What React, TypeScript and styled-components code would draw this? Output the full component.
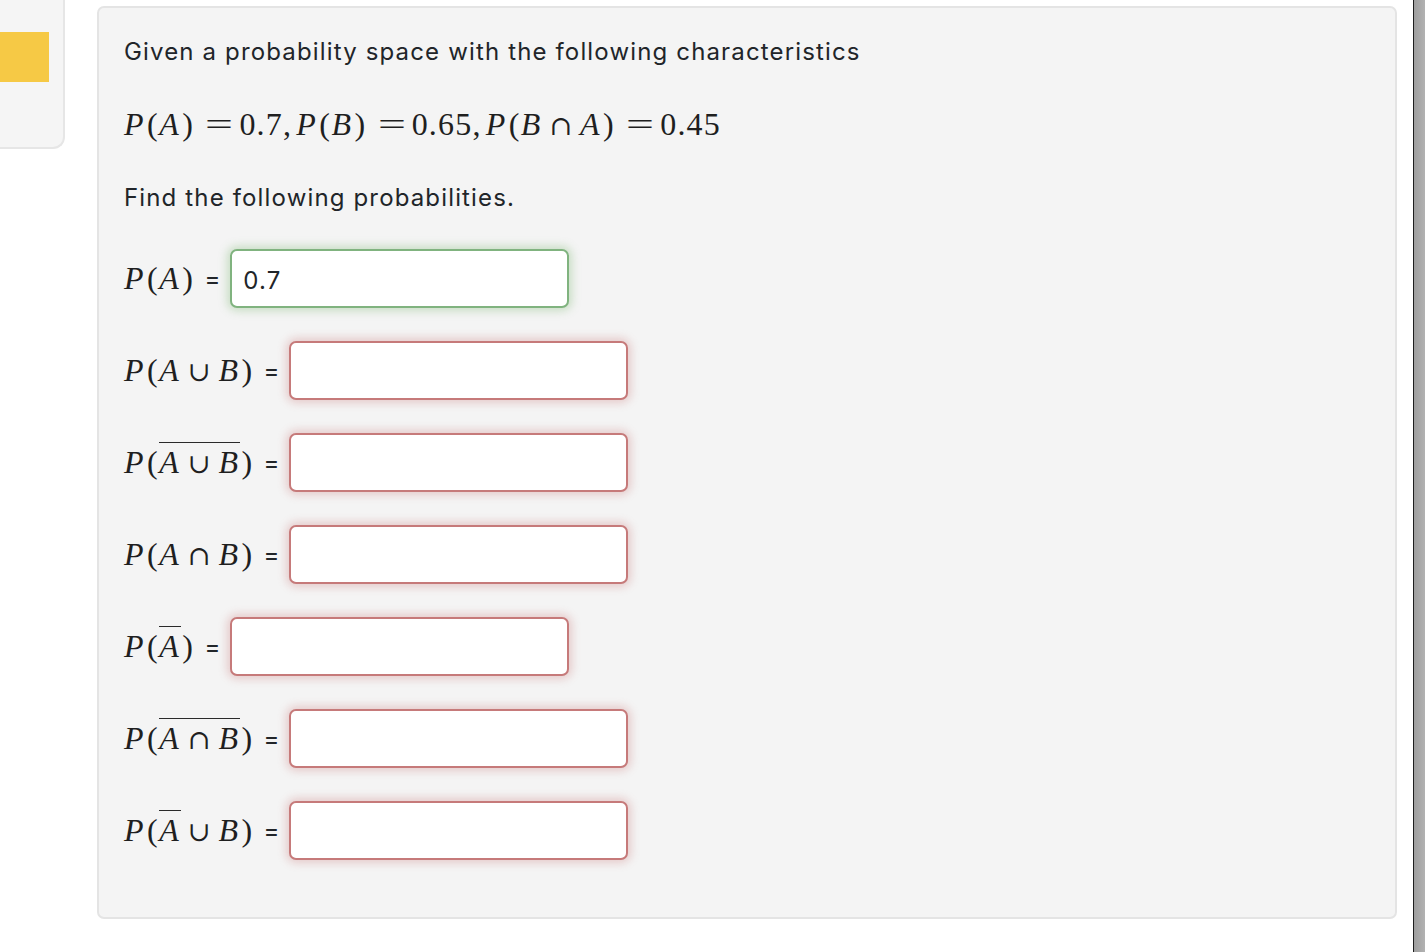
import React from "react";
import styled, { createGlobalStyle, css } from "styled-components";

const Global = createGlobalStyle`
  html, body { margin: 0; padding: 0; background: #ffffff; }
  body { font-family: Inter, "Noto Sans", "Liberation Sans", sans-serif; color: #212529; }
`;

const Page = styled.div`
  display: flex;
  align-items: flex-start;
  width: 1425px;
  height: 952px;
  overflow: hidden;
`;

const Sidebar = styled.aside`
  box-sizing: border-box;
  width: 65px;
  height: 149px;
  flex: none;
  background: #f5f5f5;
  border-right: 2px solid #e6e6e6;
  border-bottom: 2px solid #e6e6e6;
  border-bottom-right-radius: 12px;
  padding-top: 32px;
`;

const Flag = styled.div`
  width: 49px;
  height: 50px;
  background: #f6c945;
`;

const Card = styled.main`
  box-sizing: border-box;
  flex: none;
  width: 1300px;
  height: 913px;
  margin: 6px 0 0 32px;
  background: #f4f4f4;
  border: 2px solid #e4e4e4;
  border-radius: 7px;
  padding: 18px 0 0 25px;
`;

const Stripe = styled.div`
  flex: none;
  margin-left: 16px;
  width: 12px;
  height: 952px;
  border-left: 1px solid #1e1e1e;
  background: linear-gradient(90deg, #9e9e9e, #b4b4b4);
`;

const Para = styled.p`
  margin: 0;
  font-size: 24px;
  line-height: 52px;
  letter-spacing: 1.15px;
`;

const MathLine = styled.div`
  margin: 20px 0 22px;
  height: 52px;
  display: flex;
  align-items: center;
`;

const M = styled.span`
  font-family: "Liberation Serif", "DejaVu Serif", serif;
  font-size: 32px;
  line-height: normal;
  color: #1f1f1f;
  white-space: nowrap;
`;

const I = styled.span`
  font-style: italic;
  margin-right: 2px;
`;

const Paren = styled.span`
  margin: 0 1.5px;
`;

const Rel = styled.span`
  display: inline-block;
  width: 28px;
  text-align: center;
  margin: 0 6px 0 11px;
  transform: scaleX(1.55);
`;

const Num = styled.span<{ $gap?: boolean }>`
  letter-spacing: 1.2px;
  margin-right: ${(p) => (p.$gap ? "4px" : "0")};
`;

const Bin = styled.span`
  font-family: "DejaVu Serif", serif;
  font-size: 27px;
  margin: 0 8px 0 7px;
`;

const Over = styled.span`
  position: relative;
  &::before {
    content: "";
    position: absolute;
    left: 0;
    right: 0;
    top: -2px;
    border-top: 1.5px solid #2a2a2a;
  }
`;

const Rows = styled.div`
  display: flex;
  flex-direction: column;
  gap: 34px;
  margin-top: 25px;
`;

const Row = styled.div`
  display: flex;
  align-items: center;
  height: 58px;
`;

const Eq = styled.span`
  font-size: 24px;
  margin: 0 10px 0 10px;
`;

const Input = styled.input<{ $state: "ok" | "bad" }>`
  box-sizing: border-box;
  width: 339px;
  height: 59px;
  border-radius: 7px;
  background: #ffffff;
  font-family: Inter, "Noto Sans", sans-serif;
  font-size: 24px;
  letter-spacing: 1.2px;
  color: #212529;
  padding: 4px 11px 0;
  outline: none;
  ${(p) =>
    p.$state === "ok"
      ? css`
          border: 2px solid #80b37f;
          box-shadow: 0 0 9px 3px rgba(120, 180, 110, 0.35);
        `
      : css`
          border: 2px solid #c67a7a;
          box-shadow: 0 0 9px 3px rgba(200, 110, 110, 0.3);
        `}
`;

const P = ({ children }: { children: React.ReactNode }) => (
  <>
    <I>P</I>
    <Paren>(</Paren>
    {children}
    <Paren>)</Paren>
  </>
);

const rows: { label: React.ReactNode; value: string; state: "ok" | "bad" }[] = [
  { label: <P><I>A</I></P>, value: "0.7", state: "ok" },
  { label: <P><I>A</I><Bin>∪</Bin><I>B</I></P>, value: "", state: "bad" },
  { label: <P><Over><I>A</I><Bin>∪</Bin><I>B</I></Over></P>, value: "", state: "bad" },
  { label: <P><I>A</I><Bin>∩</Bin><I>B</I></P>, value: "", state: "bad" },
  { label: <P><Over><I>A</I></Over></P>, value: "", state: "bad" },
  { label: <P><Over><I>A</I><Bin>∩</Bin><I>B</I></Over></P>, value: "", state: "bad" },
  { label: <P><Over><I>A</I></Over><Bin>∪</Bin><I>B</I></P>, value: "", state: "bad" },
];

export default function App() {
  return (
    <>
      <Global />
      <Page>
        <Sidebar>
          <Flag />
        </Sidebar>
        <Card>
          <Para>Given a probability space with the following characteristics</Para>
          <MathLine>
            <M>
              <P><I>A</I></P>
              <Rel>=</Rel>
              <Num $gap>0.7,</Num>
              <P><I>B</I></P>
              <Rel>=</Rel>
              <Num $gap>0.65,</Num>
              <P><I>B</I><Bin>∩</Bin><I>A</I></P>
              <Rel>=</Rel>
              <Num>0.45</Num>
            </M>
          </MathLine>
          <Para>Find the following probabilities.</Para>
          <Rows>
            {rows.map((r, i) => (
              <Row key={i}>
                <M>{r.label}</M>
                <Eq>=</Eq>
                <Input $state={r.state} defaultValue={r.value} readOnly />
              </Row>
            ))}
          </Rows>
        </Card>
        <Stripe />
      </Page>
    </>
  );
}
